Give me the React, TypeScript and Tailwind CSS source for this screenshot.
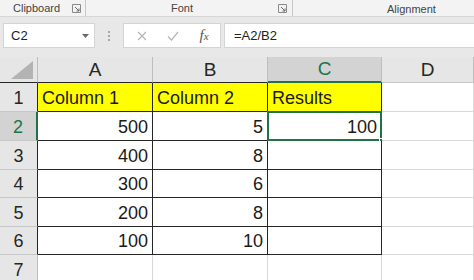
import React from 'react';

const GREEN = '#217346';

const cols = [
    { key: 'A', width: 'w-[115px]' },
    { key: 'B', width: 'w-[115px]' },
    { key: 'C', width: 'w-[114px]' },
    { key: 'D', width: 'flex-1' },
];

const rows: { n: number; h: string; cells: string[] }[] = [
    { n: 1, h: 'h-[29px]', cells: ['Column 1', 'Column 2', 'Results', ''] },
    { n: 2, h: 'h-[29px]', cells: ['500', '5', '100', ''] },
    { n: 3, h: 'h-[29px]', cells: ['400', '8', '', ''] },
    { n: 4, h: 'h-[28px]', cells: ['300', '6', '', ''] },
    { n: 5, h: 'h-[29px]', cells: ['200', '8', '', ''] },
    { n: 6, h: 'h-[28px]', cells: ['100', '10', '', ''] },
    { n: 7, h: 'h-[29px]', cells: ['', '', '', ''] },
];

function Launcher() {
    return (
        <svg width="9" height="9" viewBox="0 0 9 9" className="shrink-0">
            <path d="M0.5 0.5 H8.5 V8.5 H0.5 Z" fill="none" stroke="#8a8a8a" strokeWidth="1" />
            <path d="M3 3 L7 7 M4.5 7 H7 V4.5" fill="none" stroke="#6a6a6a" strokeWidth="1" />
        </svg>
    );
}

function RibbonLabels() {
    return (
        <div className="flex h-[17px] bg-[#f3f3f3] border-b border-[#d6d6d6] text-[11px] leading-[17px] text-[#444]">
            <div className="w-[86px] flex items-center border-r border-[#c8c8c8] pl-[13px] pr-[4px] pt-[1px]">
                <span className="flex-1">Clipboard</span>
                <Launcher />
            </div>
            <div className="w-[207px] flex items-center border-r border-[#c8c8c8] pr-[5px] pt-[1px]">
                <span className="flex-1 text-center">Font</span>
                <Launcher />
            </div>
            <div className="flex-1 pl-[94px] pt-[1px]">Alignment</div>
        </div>
    );
}

function FormulaBar() {
    return (
        <div className="flex items-start h-[40px] bg-[#e8e8e8] pt-[6px] text-[13px] text-[#222]">
            <div className="ml-[3px] w-[92px] h-[25px] bg-white border border-[#d4d4d4] flex items-center pl-[7px] pr-[5px]">
                <span className="flex-1">C2</span>
                <svg width="7" height="4" viewBox="0 0 7 4">
                    <path d="M0 0 H7 L3.5 4 Z" fill="#6b6b6b" />
                </svg>
            </div>
            <div className="w-[28px] h-[25px] flex flex-col items-center justify-center gap-[2px]">
                <span className="w-[2px] h-[2px] bg-[#a8a8a8]" />
                <span className="w-[2px] h-[2px] bg-[#a8a8a8]" />
                <span className="w-[2px] h-[2px] bg-[#a8a8a8]" />
            </div>
            <div className="w-[98px] h-[25px] bg-white border border-[#d4d4d4] flex items-center">
                <div className="w-[34px] flex justify-center pl-[2px]">
                    <svg width="10" height="10" viewBox="0 0 10 10">
                        <path d="M1 1 L9 9 M9 1 L1 9" stroke="#b5b5b5" strokeWidth="1.2" />
                    </svg>
                </div>
                <div className="w-[30px] flex justify-center">
                    <svg width="12" height="10" viewBox="0 0 12 10">
                        <path d="M1 5.5 L4.5 9 L11 1" fill="none" stroke="#b5b5b5" strokeWidth="1.2" />
                    </svg>
                </div>
                <div className="w-[32px] flex justify-center">
                    <span className="font-['Liberation_Serif',serif] italic text-[15px] text-[#555] leading-none">
                        f<span className="text-[11px]">x</span>
                    </span>
                </div>
            </div>
            <div className="ml-[3px] flex-1 h-[25px] bg-white border border-[#d4d4d4] border-r-0 flex items-center pl-[9px]">
                =A2/B2
            </div>
        </div>
    );
}

function HeaderRow() {
    return (
        <div className="flex h-[26px] bg-[#e6e6e6]">
            <div className="w-[38px] relative border-r border-[#bdbdbd] border-b border-b-[#262626]">
                <svg width="22" height="18" viewBox="0 0 22 18" className="absolute right-[4px] bottom-[3px]">
                    <path d="M22 0 V18 H0 Z" fill="#b3b3b3" />
                </svg>
            </div>
            {cols.map(c => {
                const sel = c.key === 'C';
                const inRange = c.key !== 'D';
                return (
                    <div
                        key={c.key}
                        className={`${c.width} flex items-end justify-center pb-[1px] text-[19px] leading-[22px] border-r ${
                            sel
                                ? 'bg-[#d3d3d3] text-[#217346] border-r-[#bdbdbd] border-b-2 border-b-[#217346]'
                                : inRange
                                ? 'text-[#262626] border-r-[#bdbdbd] border-b border-b-[#262626]'
                                : 'text-[#262626] border-r-[#bdbdbd] border-b border-b-[#c6c6c6]'
                        }`}
                    >
                        {c.key}
                    </div>
                );
            })}
        </div>
    );
}

export default function App() {
    return (
        <div className="w-[474px] h-[280px] overflow-hidden bg-white font-['Liberation_Sans',Arial,sans-serif]">
            <RibbonLabels />
            <FormulaBar />
            <HeaderRow />
            {rows.map(r => {
                const boxed = r.n <= 6;
                const selRow = r.n === 2;
                return (
                    <div key={r.n} className={`flex ${r.h}`}>
                        <div
                            className={`w-[38px] flex items-end justify-center pb-[2px] text-[18px] leading-[22px] border-b border-b-[#c6c6c6] ${
                                selRow
                                    ? 'bg-[#d3d3d3] text-[#217346] border-r-2 border-r-[#217346]'
                                    : boxed
                                    ? 'bg-[#e6e6e6] text-[#262626] border-r border-r-[#262626]'
                                    : 'bg-[#e6e6e6] text-[#262626] border-r border-r-[#bdbdbd]'
                            }`}
                        >
                            {r.n}
                        </div>
                        {cols.map((c, i) => {
                            const inRange = boxed && c.key !== 'D';
                            const header = r.n === 1 && inRange;
                            const value = r.cells[i];
                            const numeric = value !== '' && !isNaN(Number(value));
                            const selected = r.n === 2 && c.key === 'C';
                            return (
                                <div
                                    key={c.key}
                                    className={`${c.width} relative flex items-end pb-[3px] px-[4px] text-[18px] leading-[20px] text-[#1a1a1a] border-r border-b ${
                                        numeric ? 'justify-end' : 'justify-start'
                                    } ${header ? 'bg-[#ffff00]' : 'bg-white'} ${
                                        inRange ? 'border-[#262626]' : 'border-[#d8d8d8]'
                                    }`}
                                >
                                    {value}
                                    {selected && (
                                        <>
                                            <span className="absolute -left-[1px] -top-[1px] -right-[1px] -bottom-[1px] border-2 border-[#217346] pointer-events-none" />
                                            <span
                                                className="absolute -right-[4px] -bottom-[4px] w-[6px] h-[6px] border border-white"
                                                style={{ backgroundColor: GREEN }}
                                            />
                                        </>
                                    )}
                                </div>
                            );
                        })}
                    </div>
                );
            })}
        </div>
    );
}
